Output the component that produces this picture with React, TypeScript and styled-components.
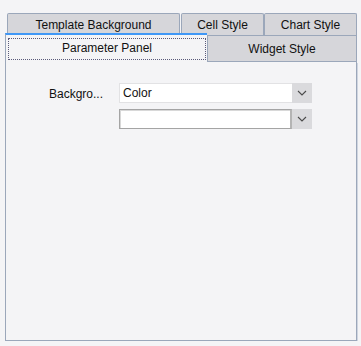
import React from "react";
import styled, { createGlobalStyle } from "styled-components";

const GlobalStyle = createGlobalStyle`
  html, body {
    margin: 0;
    padding: 0;
    background: #f4f4f6;
  }
  body {
    font-family: "Liberation Sans", Arial, sans-serif;
    font-size: 12px;
    color: #111;
  }
`;

const Page = styled.div`
  padding: 13px 0 0 5px;
  width: 352px;
`;

const TabRow = styled.div`
  display: flex;
  padding-left: 2px;
  height: 22px;
`;

const BackTab = styled.div<{ $w: number; $gap?: number }>`
  box-sizing: border-box;
  width: ${(p) => p.$w}px;
  margin-left: ${(p) => p.$gap ?? 0}px;
  height: 22px;
  background: #d6d6da;
  border: 1px solid #9ba7ba;
  border-bottom: none;
  border-radius: 2px 2px 0 0;
  display: flex;
  align-items: center;
  justify-content: center;
  padding-top: 1px;
`;

const FrontRow = styled.div`
  display: flex;
  align-items: flex-end;
  margin-top: -2px;
  height: 29px;
`;

const ActiveTab = styled.div`
  box-sizing: border-box;
  width: 202px;
  height: 29px;
  background: #f4f4f6;
  border-top: 2px solid #3f97f6;
  border-left: 1px solid #9ba7ba;
  padding: 3px 1px 2px 2px;
`;

const FocusRing = styled.div`
  box-sizing: border-box;
  height: 22px;
  border: 1px dotted #5a5a7a;
  display: flex;
  align-items: center;
  justify-content: center;
  padding-bottom: 3px;
`;

const PlainTab = styled.div`
  box-sizing: border-box;
  width: 150px;
  height: 27px;
  background: #d6d6da;
  border: 1px solid #9ba7ba;
  display: flex;
  align-items: center;
  justify-content: center;
`;

const Panel = styled.div`
  box-sizing: border-box;
  height: 279px;
  border: 1px solid #9ba7ba;
  border-top: none;
  box-shadow: 1px 1px 0 #cfd5e0;
  padding: 21px 0 0 43px;
`;

const FormGrid = styled.div`
  display: grid;
  grid-template-columns: 70px 193px;
  row-gap: 6px;
  align-items: center;
`;

const Label = styled.div`
  padding-top: 1px;
`;

const Combo = styled.div`
  display: flex;
  height: 20px;
`;

const Field = styled.div<{ $sunken?: boolean }>`
  box-sizing: border-box;
  flex: 1;
  background: #fff;
  border: 1px solid ${(p) => (p.$sunken ? "#a4a4a4" : "#e2e2e4")};
  box-shadow: ${(p) => (p.$sunken ? "inset 1px 1px 0 #d8d8d8" : "none")};
  border-right: ${(p) => (p.$sunken ? "2px solid #b4b4b4" : "none")};
  display: flex;
  align-items: center;
  padding-left: 3px;
`;

const ArrowButton = styled.div`
  width: 20px;
  background: #dadadd;
  display: flex;
  align-items: center;
  justify-content: center;
`;

const Chevron = () => (
  <svg width="10" height="6" viewBox="0 0 10 6">
    <path d="M1 1 L5 5 L9 1" fill="none" stroke="#4a4a4a" strokeWidth="1.1" />
  </svg>
);

export default function App() {
  return (
    <>
      <GlobalStyle />
      <Page>
        <TabRow>
          <BackTab $w={173}>Template Background</BackTab>
          <BackTab $w={83} $gap={1}>Cell Style</BackTab>
          <BackTab $w={93}>Chart Style</BackTab>
        </TabRow>
        <FrontRow>
          <ActiveTab>
            <FocusRing>Parameter Panel</FocusRing>
          </ActiveTab>
          <PlainTab>Widget Style</PlainTab>
        </FrontRow>
        <Panel>
          <FormGrid>
            <Label>Backgro...</Label>
            <Combo>
              <Field>Color</Field>
              <ArrowButton>
                <Chevron />
              </ArrowButton>
            </Combo>
            <div />
            <Combo>
              <Field $sunken />
              <ArrowButton>
                <Chevron />
              </ArrowButton>
            </Combo>
          </FormGrid>
        </Panel>
      </Page>
    </>
  );
}
